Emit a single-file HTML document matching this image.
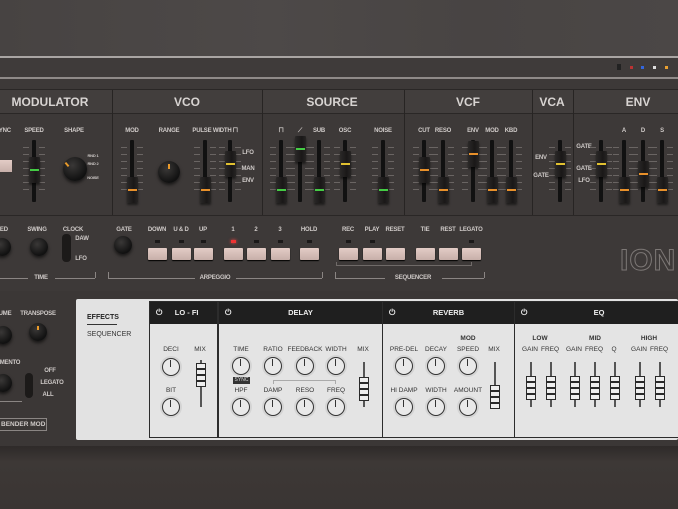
<!DOCTYPE html>
<html><head><meta charset="utf-8"><style>
*{margin:0;padding:0;box-sizing:border-box}
body{width:678px;height:509px;overflow:hidden;position:relative;background:#3b3634;font-family:"Liberation Sans",sans-serif;}
.a{position:absolute}
.t{position:absolute;transform:translateX(-50%);white-space:nowrap;font-size:6px;font-weight:bold;color:#cfcac8;letter-spacing:-.2px}
.h{position:absolute;transform:translateX(-50%);font-size:12px;font-weight:bold;color:#d8d4d2;top:95px}
.div{position:absolute;top:90px;width:1px;height:125px;background:#272423}
.slot{position:absolute;width:4px;margin-left:-2px;background:#111;border-radius:1px}
.tk{position:absolute;width:22px;margin-left:-11px;background:repeating-linear-gradient(#6a6563 0 1px,transparent 1px 7px);}
.tk:after{content:"";position:absolute;left:6px;right:6px;top:0;bottom:0;background:#3d3938}
.cap{position:absolute;width:11px;height:26px;margin-left:-5.5px;margin-top:-13px;background:linear-gradient(90deg,#2b2928,#1a1818 60%,#262423);border-radius:1px;box-shadow:0 2px 2px rgba(0,0,0,.5)}
.cap i{position:absolute;left:1px;right:1px;top:12px;height:2px}
.kn{position:absolute;border-radius:50%;background:radial-gradient(circle at 40% 35%,#3a3837,#111 70%);box-shadow:0 2px 3px rgba(0,0,0,.6)}
.btn{position:absolute;top:248px;width:19px;height:12px;margin-left:-9.5px;background:linear-gradient(#e3ccc6,#c7afa9);border-radius:1px;box-shadow:0 1px 1px #000}
.led{position:absolute;top:240px;width:5px;height:3px;margin-left:-2.5px;background:#1a1818}
.e{position:absolute;transform:translateX(-50%);white-space:nowrap;font-size:6.5px;color:#333}
.ek{position:absolute;width:18px;height:18px;margin:-9px 0 0 -9px;border-radius:50%;border:1.2px solid #333;background:#e9e9e9;box-shadow:0 0 0 2px #d4d4d4}
.ek:after{content:"";position:absolute;left:7px;top:1px;width:1.3px;height:7px;background:#333}
.box{position:absolute;top:301px;height:137px;border:1.5px solid #2c2c2c;background:#e4e4e4}
.bh{position:absolute;left:0;right:0;top:0;height:22px;background:#1f1f1f;color:#eee;font-size:7.5px;font-weight:bold;text-align:center;line-height:22px}
.bh b{position:absolute;left:6px;font-size:8px}
.rail{position:absolute;width:1.5px;background:#555}
.ec{position:absolute;width:10px;height:24px;margin-left:-5px;border:1.5px solid #2a2a2a;background:repeating-linear-gradient(#eee 0 4px,#2a2a2a 4px 6px)}
</style></head><body>
<div class="a" style="left:0;top:0;width:678px;height:57px;background:linear-gradient(90deg,#474342,#4d4948 40%,#484443 70%,#4b4746)"></div>
<div class="a" style="left:0;top:56px;width:678px;height:2px;background:#a9a5a3"></div>
<div class="a" style="left:0;top:58px;width:678px;height:20px;background:#3f3b3a"></div>
<div class="a" style="left:0;top:77px;width:678px;height:2px;background:#8f8a88"></div>
<div class="a" style="left:617px;top:64px;width:4px;height:6px;background:#222"></div>
<div class="a" style="left:630px;top:66px;width:3px;height:3px;background:#b33"></div>
<div class="a" style="left:641px;top:66px;width:3px;height:3px;background:#36d"></div>
<div class="a" style="left:653px;top:66px;width:3px;height:3px;background:#ddd"></div>
<div class="a" style="left:665px;top:66px;width:3px;height:3px;background:#e9a030"></div>
<div class="a" style="left:0;top:79px;width:678px;height:212px;background:#3d3938"></div>
<div class="a" style="left:0;top:89px;width:678px;height:25px;background:#423e3d;border-top:1px solid #2a2726;border-bottom:1px solid #2a2726"></div>
<div class="a" style="left:0;top:215px;width:678px;height:1px;background:#2a2726"></div>
<div class="div" style="left:112px"></div><div class="div" style="left:262px"></div><div class="div" style="left:404px"></div><div class="div" style="left:532px"></div><div class="div" style="left:573px"></div>
<div class="h" style="left:50px">MODULATOR</div><div class="h" style="left:187px">VCO</div><div class="h" style="left:332px">SOURCE</div><div class="h" style="left:468px">VCF</div><div class="h" style="left:552px">VCA</div><div class="h" style="left:638px">ENV</div>
<div class="t" style="left:3px;top:128px">SYNC</div>
<div class="t" style="left:34px;top:128px">SPEED</div><div class="t" style="left:74px;top:128px">SHAPE</div>
<div class="t" style="left:132px;top:128px">MOD</div><div class="t" style="left:169px;top:128px">RANGE</div><div class="t" style="left:215px;top:128px">PULSE WIDTH ⨅</div>
<div class="t" style="left:281px;top:128px">⨅</div><div class="t" style="left:300px;top:128px">⟋</div><div class="t" style="left:319px;top:128px">SUB</div><div class="t" style="left:345px;top:128px">OSC</div><div class="t" style="left:383px;top:128px">NOISE</div>
<div class="t" style="left:424px;top:128px">CUT</div><div class="t" style="left:443px;top:128px">RESO</div><div class="t" style="left:473px;top:128px">ENV</div><div class="t" style="left:492px;top:128px">MOD</div><div class="t" style="left:511px;top:128px">KBD</div>
<div class="t" style="left:624px;top:128px">A</div><div class="t" style="left:643px;top:128px">D</div><div class="t" style="left:662px;top:128px">S</div>
<div class="t" style="left:248px;top:150px">LFO</div><div class="t" style="left:248px;top:166px">MAN</div><div class="t" style="left:248px;top:178px">ENV</div>
<div class="t" style="left:541px;top:155px">ENV</div><div class="t" style="left:541px;top:173px">GATE</div>
<div class="t" style="left:584px;top:144px">GATE</div><div class="t" style="left:584px;top:166px">GATE</div><div class="t" style="left:584px;top:178px">LFO</div>
<div class="t" style="left:93px;top:153px;font-size:4px">RND 1</div><div class="t" style="left:93px;top:161px;font-size:4px">RND 2</div><div class="t" style="left:93px;top:175px;font-size:4px">NOISE</div>
<div class="a" style="left:0;top:160px;width:12px;height:12px;background:linear-gradient(#e3ccc6,#c7afa9)"></div>
<div id="sl"></div>
<div class="kn" style="left:63px;top:157px;width:24px;height:24px"></div>
<div class="a" style="left:66px;top:162px;width:2px;height:5px;background:#e99a2a;transform:rotate(-40deg)"></div>
<div class="kn" style="left:158px;top:161px;width:22px;height:22px"></div>
<div class="a" style="left:168px;top:164px;width:2px;height:5px;background:#e99a2a"></div>
<div class="t" style="left:2px;top:227px">EED</div><div class="t" style="left:37px;top:227px">SWING</div><div class="t" style="left:73px;top:227px">CLOCK</div><div class="t" style="left:124px;top:227px">GATE</div>
<div class="t" style="left:157px;top:227px">DOWN</div><div class="t" style="left:181px;top:227px">U &amp; D</div><div class="t" style="left:203px;top:227px">UP</div><div class="t" style="left:233px;top:227px">1</div><div class="t" style="left:256px;top:227px">2</div><div class="t" style="left:280px;top:227px">3</div><div class="t" style="left:309px;top:227px">HOLD</div>
<div class="t" style="left:348px;top:227px">REC</div><div class="t" style="left:372px;top:227px">PLAY</div><div class="t" style="left:395px;top:227px">RESET</div><div class="t" style="left:425px;top:227px">TIE</div><div class="t" style="left:448px;top:227px">REST</div><div class="t" style="left:471px;top:227px">LEGATO</div>
<div class="led" style="left:157px"></div><div class="led" style="left:181px"></div><div class="led" style="left:203px"></div><div class="led" style="left:233px;background:#e33;box-shadow:0 0 3px #f44"></div><div class="led" style="left:256px"></div><div class="led" style="left:280px"></div><div class="led" style="left:309px"></div><div class="led" style="left:348px"></div><div class="led" style="left:372px"></div><div class="led" style="left:471px"></div>
<div class="btn" style="left:157px"></div><div class="btn" style="left:181px"></div><div class="btn" style="left:203px"></div><div class="btn" style="left:233px"></div><div class="btn" style="left:256px"></div><div class="btn" style="left:280px"></div><div class="btn" style="left:309px"></div><div class="btn" style="left:348px"></div><div class="btn" style="left:372px"></div><div class="btn" style="left:395px"></div><div class="btn" style="left:425px"></div><div class="btn" style="left:448px"></div><div class="btn" style="left:471px"></div>
<div class="kn" style="left:-7px;top:238px;width:18px;height:18px"></div>
<div class="kn" style="left:30px;top:238px;width:18px;height:18px"></div>
<div class="kn" style="left:114px;top:236px;width:18px;height:18px"></div>
<div class="a" style="left:62px;top:234px;width:9px;height:28px;background:#1c1a19;border-radius:4px"></div>
<div class="t" style="left:82px;top:236px">DAW</div><div class="t" style="left:81px;top:256px">LFO</div>
<div class="a" style="left:0;top:278px;width:28px;height:1px;background:#8a8583"></div><div class="a" style="left:55px;top:278px;width:40px;height:1px;background:#8a8583"></div><div class="a" style="left:95px;top:272px;width:1px;height:6px;background:#8a8583"></div>
<div class="t" style="left:41px;top:275px">TIME</div>
<div class="a" style="left:108px;top:278px;width:87px;height:1px;background:#8a8583"></div><div class="a" style="left:236px;top:278px;width:86px;height:1px;background:#8a8583"></div><div class="a" style="left:108px;top:272px;width:1px;height:6px;background:#8a8583"></div><div class="a" style="left:322px;top:272px;width:1px;height:6px;background:#8a8583"></div>
<div class="t" style="left:215px;top:275px">ARPEGGIO</div>
<div class="a" style="left:335px;top:278px;width:50px;height:1px;background:#8a8583"></div><div class="a" style="left:442px;top:278px;width:42px;height:1px;background:#8a8583"></div><div class="a" style="left:335px;top:272px;width:1px;height:6px;background:#8a8583"></div><div class="a" style="left:484px;top:272px;width:1px;height:6px;background:#8a8583"></div>
<div class="t" style="left:413px;top:275px">SEQUENCER</div>
<div class="a" style="left:336px;top:262px;width:136px;height:4px;border:1px solid #6f6a68;border-top:none"></div>
<div class="a" style="left:620px;top:246px;font-size:30px;font-weight:bold;color:transparent;-webkit-text-stroke:1px #7d7876;letter-spacing:1px;line-height:30px">ION</div>
<div class="a" style="left:0;top:291px;width:678px;height:157px;background:#3b3736"></div>
<div class="a" style="left:0;top:446px;width:678px;height:63px;background:linear-gradient(#2e2a29,#3d3836 25%,#3a3533)"></div>
<div class="t" style="left:5px;top:311px">UME</div><div class="t" style="left:38px;top:311px">TRANSPOSE</div>
<div class="kn" style="left:-6px;top:326px;width:18px;height:18px"></div>
<div class="kn" style="left:29px;top:323px;width:18px;height:18px"></div>
<div class="a" style="left:37px;top:326px;width:2px;height:4px;background:#e99a2a"></div>
<div class="t" style="left:10px;top:360px">MENTO</div>
<div class="kn" style="left:-6px;top:374px;width:18px;height:18px"></div>
<div class="a" style="left:25px;top:373px;width:8px;height:25px;background:#1c1a19;border-radius:4px"></div>
<div class="t" style="left:50px;top:368px">OFF</div><div class="t" style="left:52px;top:380px">LEGATO</div><div class="t" style="left:48px;top:392px">ALL</div>
<div class="a" style="left:0;top:401px;width:22px;height:1px;background:#8a8583"></div>
<div class="a" style="left:-2px;top:418px;width:49px;height:13px;border:1px solid #8a8583;font-size:6.5px;font-weight:bold;color:#d0cbc9;line-height:11px;padding-left:2px">BENDER MOD</div>
<div class="a" style="left:76px;top:299px;width:602px;height:141px;background:#e2e2e2;border-radius:2px"></div>
<div class="a" style="left:87px;top:314px;font-size:7px;font-weight:bold;color:#222">EFFECTS</div>
<div class="a" style="left:87px;top:324px;width:30px;height:1px;background:#333"></div>
<div class="a" style="left:87px;top:331px;font-size:7px;color:#333">SEQUENCER</div>
<div class="box" style="left:149px;width:69px"><div class="bh"><b>⏻</b>&nbsp;&nbsp;&nbsp;LO - FI</div></div>
<div class="box" style="left:218px;width:165px"><div class="bh"><b>⏻</b>DELAY</div></div>
<div class="box" style="left:382px;width:133px"><div class="bh"><b>⏻</b>REVERB</div></div>
<div class="box" style="left:514px;width:170px"><div class="bh"><b>⏻</b>EQ</div></div>
<div class="e" style="left:171px;top:346px">DECI</div><div class="e" style="left:171px;top:387px">BIT</div><div class="e" style="left:200px;top:346px">MIX</div>
<div class="ek" style="left:171px;top:367px"></div><div class="ek" style="left:171px;top:407px"></div>
<div class="rail" style="left:200px;top:360px;height:47px"></div><div class="ec" style="left:201px;top:363px"></div>
<div class="e" style="left:241px;top:346px">TIME</div><div class="e" style="left:273px;top:346px">RATIO</div><div class="e" style="left:305px;top:346px">FEEDBACK</div><div class="e" style="left:336px;top:346px">WIDTH</div><div class="e" style="left:363px;top:346px">MIX</div>
<div class="ek" style="left:241px;top:366px"></div><div class="ek" style="left:273px;top:366px"></div><div class="ek" style="left:305px;top:366px"></div><div class="ek" style="left:336px;top:366px"></div>
<div class="a" style="left:233px;top:377px;width:17px;height:7px;background:#333;color:#ddd;font-size:5px;text-align:center;line-height:7px">SYNC</div>
<div class="a" style="left:273px;top:380px;width:63px;height:4px;border:1px solid #aaa;border-bottom:none"></div>
<div class="e" style="left:241px;top:387px">HPF</div><div class="e" style="left:273px;top:387px">DAMP</div><div class="e" style="left:305px;top:387px">RESO</div><div class="e" style="left:336px;top:387px">FREQ</div>
<div class="ek" style="left:241px;top:407px"></div><div class="ek" style="left:273px;top:407px"></div><div class="ek" style="left:305px;top:407px"></div><div class="ek" style="left:336px;top:407px"></div>
<div class="rail" style="left:363px;top:362px;height:45px"></div><div class="ec" style="left:364px;top:377px"></div>
<div class="e" style="left:468px;top:335px;font-weight:bold">MOD</div>
<div class="e" style="left:404px;top:346px">PRE-DEL</div><div class="e" style="left:436px;top:346px">DECAY</div><div class="e" style="left:468px;top:346px">SPEED</div><div class="e" style="left:494px;top:346px">MIX</div>
<div class="ek" style="left:404px;top:366px"></div><div class="ek" style="left:436px;top:366px"></div><div class="ek" style="left:468px;top:366px"></div>
<div class="e" style="left:404px;top:387px">HI DAMP</div><div class="e" style="left:436px;top:387px">WIDTH</div><div class="e" style="left:468px;top:387px">AMOUNT</div>
<div class="ek" style="left:404px;top:407px"></div><div class="ek" style="left:436px;top:407px"></div><div class="ek" style="left:468px;top:407px"></div>
<div class="rail" style="left:494px;top:362px;height:45px"></div><div class="ec" style="left:495px;top:385px"></div>
<div class="e" style="left:540px;top:335px;font-weight:bold">LOW</div><div class="e" style="left:595px;top:335px;font-weight:bold">MID</div><div class="e" style="left:649px;top:335px;font-weight:bold">HIGH</div>
<div class="e" style="left:530px;top:346px">GAIN</div><div class="e" style="left:550px;top:346px">FREQ</div><div class="e" style="left:574px;top:346px">GAIN</div><div class="e" style="left:594px;top:346px">FREQ</div><div class="e" style="left:614px;top:346px">Q</div><div class="e" style="left:639px;top:346px">GAIN</div><div class="e" style="left:659px;top:346px">FREQ</div>
<div class="rail" style="left:530px;top:362px;height:45px"></div><div class="ec" style="left:531px;top:376px"></div>
<div class="rail" style="left:550px;top:362px;height:45px"></div><div class="ec" style="left:551px;top:376px"></div>
<div class="rail" style="left:574px;top:362px;height:45px"></div><div class="ec" style="left:575px;top:376px"></div>
<div class="rail" style="left:594px;top:362px;height:45px"></div><div class="ec" style="left:595px;top:376px"></div>
<div class="rail" style="left:614px;top:362px;height:45px"></div><div class="ec" style="left:615px;top:376px"></div>
<div class="rail" style="left:639px;top:362px;height:45px"></div><div class="ec" style="left:640px;top:376px"></div>
<div class="rail" style="left:659px;top:362px;height:45px"></div><div class="ec" style="left:660px;top:376px"></div>
<script>
var s=[[34,170,'#4c4'],[132,190,'#e8902a'],[205,190,'#e8902a'],[230,164,'#e0c030'],[281,190,'#4c4'],[300,149,'#4c4'],[319,190,'#4c4'],[345,164,'#e0c030'],[383,190,'#4c4'],[424,170,'#e8902a'],[443,190,'#e8902a'],[473,154,'#e8902a'],[492,190,'#e8902a'],[511,190,'#e8902a'],[560,164,'#e0c030'],[601,164,'#e0c030'],[624,190,'#e8902a'],[643,174,'#e8902a'],[662,190,'#e8902a']];
var h='';s.forEach(function(a){h+='<div class="tk" style="left:'+a[0]+'px;top:147px;height:46px"></div><div class="slot" style="left:'+a[0]+'px;top:140px;height:62px"></div><div class="cap" style="left:'+a[0]+'px;top:'+a[1]+'px"><i style="background:'+a[2]+'"></i></div>';});
document.getElementById('sl').innerHTML=h;
</script>
</body></html>
